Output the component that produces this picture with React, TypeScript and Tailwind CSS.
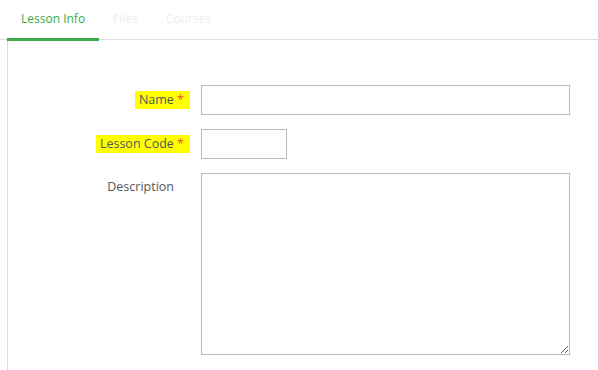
const TABS = [
  { label: 'Lesson Info', active: true },
  { label: 'Files' },
  { label: 'Courses' },
]

function Label({ text, required, marked }: { text: string; required?: boolean; marked?: boolean }) {
  return (
    <div className={`w-[190px] shrink-0 flex justify-end ${marked ? '' : 'pr-[16px]'}`}>
      <span className={`leading-[18px] text-[12.5px] text-[#555] ${marked ? 'bg-[#ffff00] pl-[4px] pr-[6px]' : ''}`}>
        {text}
        {required && <span className="text-[#f04e23]"> *</span>}
      </span>
    </div>
  )
}

export default function App() {
  return (
    <div className="w-[598px] h-[370px] bg-white overflow-hidden font-['Open_Sans',sans-serif] text-[13px]">
      <div className="flex pl-[7px] border-b border-[#ddd] h-[40px]">
        {TABS.map((t) => (
          <div
            key={t.label}
            className={`px-[14px] pt-[10px] text-[12px] ${t.active ? 'text-[#3aaa4a] border-b-[3px] border-[#3aaa4a] -mb-[2px]' : 'text-[#eee]'}`}
          >
            {t.label}
          </div>
        ))}
      </div>

      <div className="ml-[7px] border-l border-[#ddd] h-[330px] pt-[45px]">
        <div className="flex flex-col gap-[14px]">
          <div className="flex items-center -ml-[8px]">
            <Label text="Name" required marked />
            <div className="ml-[11px] w-[369px] h-[30px] border border-[#bbb]" />
          </div>
          <div className="flex items-center -ml-[8px]">
            <Label text="Lesson Code" required marked />
            <div className="ml-[11px] w-[86px] h-[30px] border border-[#bbb]" />
          </div>
          <div className="flex items-start -ml-[8px]">
            <div className="pt-[5px]">
              <Label text="Description" />
            </div>
            <textarea className="ml-[11px] w-[369px] h-[182px] border border-[#bbb] outline-none" />
          </div>
        </div>
      </div>
    </div>
  )
}
